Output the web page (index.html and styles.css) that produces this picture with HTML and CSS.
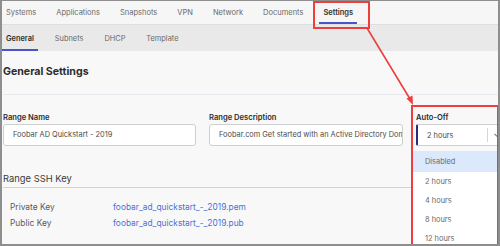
FILE: index.html
```html
<!DOCTYPE html>
<html lang="en">
<head>
<meta charset="utf-8">
<title>Range Settings</title>
<link rel="stylesheet" href="styles.css">
</head>
<body>
<div class="frame">
  <nav class="topnav">
    <a class="tab">Systems</a>
    <a class="tab">Applications</a>
    <a class="tab">Snapshots</a>
    <a class="tab">VPN</a>
    <a class="tab">Network</a>
    <a class="tab">Documents</a>
    <a class="tab active">Settings</a>
  </nav>
  <nav class="subnav">
    <a class="tab active">General</a>
    <a class="tab">Subnets</a>
    <a class="tab">DHCP</a>
    <a class="tab">Template</a>
  </nav>
  <main class="content">
    <h1 class="title">General Settings</h1>
    <div class="fields">
      <div class="field">
        <label class="label">Range Name</label>
        <div class="input">Foobar AD Quickstart - 2019</div>
      </div>
      <div class="field">
        <label class="label">Range Description</label>
        <div class="input">Foobar.com Get started with an Active Directory Domain</div>
      </div>
      <div class="field auto">
        <label class="label">Auto-Off</label>
        <div class="select">
          <span class="select-value">2 hours</span>
          <span class="select-sep"></span>
          <svg class="chev" width="8" height="8" viewBox="0 0 8 8"><path d="M1.5 2.8 L4 5.3 L6.5 2.8" fill="none" stroke="#777" stroke-width="1.1"/></svg>
        </div>
        <ul class="menu">
          <li class="opt hl">Disabled</li>
          <li class="opt">2 hours</li>
          <li class="opt">4 hours</li>
          <li class="opt">8 hours</li>
          <li class="opt">12 hours</li>
        </ul>
      </div>
    </div>
    <h2 class="section">Range SSH Key</h2>
    <div class="keys">
      <span class="key-label">Private Key</span><a class="key-link">foobar_ad_quickstart_-_2019.pem</a>
      <span class="key-label">Public Key</span><a class="key-link">foobar_ad_quickstart_-_2019.pub</a>
    </div>
  </main>
  <div class="mark mark-settings"></div>
  <div class="mark mark-auto"></div>
  <svg class="arrow" width="500" height="246" viewBox="0 0 500 246">
    <line x1="367" y1="28" x2="410" y2="99" stroke="#ef3e3e" stroke-width="1.6"/>
    <path d="M413 105 L406.5 98.5 L412.5 95.5 Z" fill="#ef3e3e"/>
  </svg>
</div>
</body>
</html>
```

FILE: styles.css
```css
* { box-sizing: border-box; }
html, body { margin: 0; padding: 0; }
body {
  font-family: Inter, "Noto Sans", sans-serif;
  background: #fff;
}
.frame {
  position: relative;
  width: 500px;
  height: 246px;
  border: 2px solid #8e8e8e;
  border-top-width: 1px;
  overflow: hidden;
  background: #f8f8f8;
  display: flex;
  flex-direction: column;
}
.topnav {
  display: flex;
  gap: 12px;
  height: 24px;
  background: #f6f6f6;
  border-bottom: 1px solid #dedede;
  flex-shrink: 0;
}
.subnav {
  display: flex;
  gap: 13px;
  height: 26px;
  background: #e9e9e9;
  flex-shrink: 0;
}
.tab {
  display: flex;
  align-items: center;
  padding: 2px 4px 0;
  font-size: 7.5px;
  color: #6a6a6a;
  border-bottom: 2px solid transparent;
}
.subnav .tab { font-size: 7.4px; }
.tab.active {
  color: #2f2f2f;
  font-weight: 600;
  border-bottom-color: #4d52c8;
}
.content {
  flex: 1;
  padding: 0 0 0 1px;
}
.title {
  margin: 0;
  padding: 14px 0 15px;
  font-size: 10.6px;
  line-height: 14px;
  font-weight: 700;
  color: #2c2c2c;
  border-bottom: 1px solid #e8e8ee;
}
.fields {
  display: grid;
  grid-template-columns: 193px 194px 110px;
  gap: 13px;
  padding-top: 18px;
}
.field { position: relative; }
.label {
  display: block;
  font-size: 7.6px;
  line-height: 10px;
  font-weight: 600;
  color: #2c2c2c;
  margin-bottom: 1px;
}
.input {
  height: 22px;
  background: #fff;
  border: 1px solid #cfcfcf;
  border-radius: 3px;
  padding: 0 9px;
  font-size: 7.4px;
  line-height: 20px;
  color: #4a4a4a;
  white-space: nowrap;
  overflow: hidden;
}
.select {
  display: flex;
  align-items: center;
  height: 22px;
  width: 100px;
  background: #fff;
  border: 1px solid #cfcfcf;
  border-left: 2px solid #2b2b7c;
  border-radius: 2px;
  padding-left: 9px;
}
.select-value {
  font-size: 7.4px;
  color: #4a4a4a;
  width: 60px;
}
.select-sep {
  width: 1px;
  height: 14px;
  background: #d6d6d6;
  margin-right: 5px;
}
.menu {
  position: absolute;
  left: -3px;
  top: 38px;
  width: 84px;
  margin: 0;
  padding: 0;
  list-style: none;
  background: #fff;
}
.opt {
  height: 19px;
  line-height: 19px;
  padding-left: 12px;
  font-size: 7.4px;
  color: #6a6a6a;
}
.opt.hl {
  height: 21px;
  line-height: 21px;
  background: #dce8fb;
}
.section {
  margin: 27px 0 0;
  padding-bottom: 2px;
  font-size: 9.4px;
  line-height: 12px;
  font-weight: 400;
  color: #3a3a3a;
  border-bottom: 1px solid #d2d2d2;
}
.keys {
  display: grid;
  grid-template-columns: 103px auto;
  grid-auto-rows: 16px;
  align-items: center;
  padding: 11px 0 0 7px;
  font-size: 8.4px;
}
.key-label { color: #5a5a5a; }
.key-link { color: #4c70d6; }
.mark {
  position: absolute;
  border: 2px solid #ef3e3e;
}
.mark-settings {
  left: 311px;
  top: 0;
  width: 57px;
  height: 28px;
}
.mark-auto {
  left: 409px;
  top: 104px;
  width: 88px;
  height: 141px;
}
.arrow {
  position: absolute;
  left: -2px;
  top: -1px;
  pointer-events: none;
}
```
